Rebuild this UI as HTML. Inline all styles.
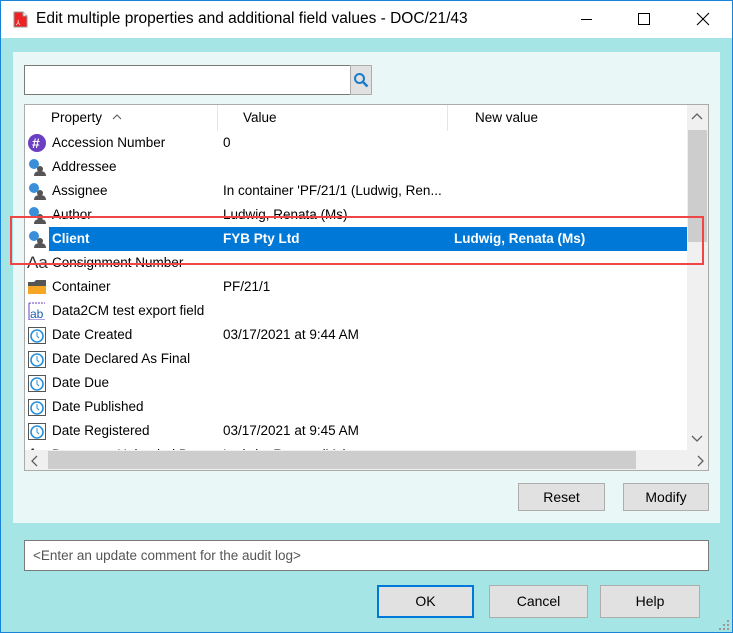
<!DOCTYPE html><html><head><style>
*{box-sizing:border-box;margin:0;padding:0}
body{width:733px;height:633px;overflow:hidden;font-family:"Liberation Sans",sans-serif;font-size:13.5px;color:#000;background:#A5E5E5;position:relative}
.a{position:absolute}
.win{left:0;top:0;width:733px;height:633px;border:1px solid #1883D7}
.title{left:1px;top:1px;width:731px;height:37px;background:#fff}
.btn{background:#E1E1E1;border:1px solid #ADADAD;text-align:center;font-size:14px}
.row{position:absolute;left:0;height:24px;line-height:24px;width:100%}
.ic{position:absolute;left:3px;top:3px;width:18px;height:18px}
.p{position:absolute;left:27px}
.v{position:absolute;left:198px}
</style></head><body>
<div class="a win"></div>
<div class="a title">
 <svg class="a" style="left:11px;top:10px" width="16" height="17"><path d="M2 1h9l4 4v11H2z" fill="#E22" stroke="#999"/><path d="M11 1v4h4" fill="#fff" stroke="#999"/><text x="4" y="14" font-size="7" fill="#fff">⅄</text></svg>
 <div class="a" style="left:35px;top:9px;font-size:15.5px">Edit multiple properties and additional field values - DOC/21/43</div>
 <div class="a" style="left:580px;top:18px;width:11px;height:1px;background:#000"></div>
 <div class="a" style="left:637px;top:12px;width:12px;height:12px;border:1px solid #000"></div>
 <svg class="a" style="left:695px;top:11px" width="14" height="14"><path d="M1 1L13 13M13 1L1 13" stroke="#000" stroke-width="1.1"/></svg>
</div>
<div class="a" style="left:13px;top:52px;width:707px;height:471px;background:#EAF7F7"></div>
<div class="a" style="left:24px;top:65px;width:327px;height:30px;background:#fff;border:1px solid #7A7A7A"></div>
<div class="a" style="left:350px;top:65px;width:22px;height:30px;background:#E1E1E1;border:1px solid #ADADAD"></div>
<svg class="a" style="left:352px;top:71px" width="18" height="18"><circle cx="7.5" cy="7.5" r="4.5" fill="none" stroke="#1A7CC8" stroke-width="2"/><path d="M11 11l4.5 4.5" stroke="#1A7CC8" stroke-width="2.5"/></svg>
<div class="a" style="left:24px;top:104px;width:685px;height:367px;background:#fff;border:1px solid #ABABAB;overflow:hidden">
 <div class="a" style="left:0;top:0;width:662px;height:26px;line-height:25px">
  <span class="a" style="left:26px">Property</span>
  <svg class="a" style="left:87px;top:9px" width="10" height="6"><path d="M1 5l4-4 4 4" fill="none" stroke="#555"/></svg>
  <div class="a" style="left:192px;top:0;width:1px;height:26px;background:#E5E5E5"></div>
  <span class="a" style="left:218px">Value</span>
  <div class="a" style="left:422px;top:0;width:1px;height:26px;background:#E5E5E5"></div>
  <span class="a" style="left:450px">New value</span>
 </div>
 <div class="a" style="left:0;top:26px;width:662px;height:320px;">
  <div class="row" style="top:0"><svg class="ic"><circle cx="9" cy="9" r="9" fill="#6A3FC1"/><text x="4" y="14" fill="#fff" font-size="14" font-weight="bold">#</text></svg><span class="p">Accession Number</span><span class="v">0</span></div>
  <div class="row" style="top:24px"><svg class="ic"><circle cx="6" cy="6" r="5" fill="#3A8FD8"/><circle cx="12" cy="11" r="3" fill="#555"/><path d="M6 18q0-5 6-5t6 5z" fill="#555"/></svg><span class="p">Addressee</span></div>
  <div class="row" style="top:48px"><svg class="ic"><circle cx="6" cy="6" r="5" fill="#3A8FD8"/><circle cx="12" cy="11" r="3" fill="#555"/><path d="M6 18q0-5 6-5t6 5z" fill="#555"/></svg><span class="p">Assignee</span><span class="v">In container 'PF/21/1 (Ludwig, Ren...</span></div>
  <div class="row" style="top:72px"><svg class="ic"><circle cx="6" cy="6" r="5" fill="#3A8FD8"/><circle cx="12" cy="11" r="3" fill="#555"/><path d="M6 18q0-5 6-5t6 5z" fill="#555"/></svg><span class="p">Author</span><span class="v">Ludwig, Renata (Ms)</span></div>
  <div class="row" style="top:96px"><div class="a" style="left:24px;top:0;width:639px;height:24px;background:#0078D7"></div><svg class="ic"><circle cx="6" cy="6" r="5" fill="#3A8FD8"/><circle cx="12" cy="11" r="3" fill="#555"/><path d="M6 18q0-5 6-5t6 5z" fill="#555"/></svg><span class="p" style="color:#fff;font-weight:bold">Client</span><span class="v" style="color:#fff;font-weight:bold">FYB Pty Ltd</span><span class="a" style="left:429px;color:#fff;font-weight:bold">Ludwig, Renata (Ms)</span></div>
  <div class="row" style="top:120px"><span class="a" style="left:2px;font-size:17px;color:#333">Aa</span><span class="p">Consignment Number</span></div>
  <div class="row" style="top:144px"><svg class="ic"><path d="M0 4h6l2-2h10v14H0z" fill="#555"/><path d="M0 8h18v8H0z" fill="#F6A623"/></svg><span class="p">Container</span><span class="v">PF/21/1</span></div>
  <div class="row" style="top:168px"><svg class="ic"><path d="M1 1h16" stroke="#6A3FC1" stroke-dasharray="2 1"/><path d="M1 1v17h16" fill="none" stroke="#6A3FC1"/><text x="2" y="16" font-size="12" fill="#1A5FB4">ab</text></svg><span class="p">Data2CM test export field</span></div>
  <div class="row" style="top:192px"><svg class="ic"><rect x="0.5" y="1.5" width="17" height="16" fill="none" stroke="#555"/><circle cx="9" cy="10" r="6" fill="#fff" stroke="#2A8FD8" stroke-width="1.6"/><path d="M9 6v4l2 2" stroke="#2A8FD8" fill="none"/></svg><span class="p">Date Created</span><span class="v">03/17/2021 at 9:44 AM</span></div>
  <div class="row" style="top:216px"><svg class="ic"><rect x="0.5" y="1.5" width="17" height="16" fill="none" stroke="#555"/><circle cx="9" cy="10" r="6" fill="#fff" stroke="#2A8FD8" stroke-width="1.6"/><path d="M9 6v4l2 2" stroke="#2A8FD8" fill="none"/></svg><span class="p">Date Declared As Final</span></div>
  <div class="row" style="top:240px"><svg class="ic"><rect x="0.5" y="1.5" width="17" height="16" fill="none" stroke="#555"/><circle cx="9" cy="10" r="6" fill="#fff" stroke="#2A8FD8" stroke-width="1.6"/><path d="M9 6v4l2 2" stroke="#2A8FD8" fill="none"/></svg><span class="p">Date Due</span></div>
  <div class="row" style="top:264px"><svg class="ic"><rect x="0.5" y="1.5" width="17" height="16" fill="none" stroke="#555"/><circle cx="9" cy="10" r="6" fill="#fff" stroke="#2A8FD8" stroke-width="1.6"/><path d="M9 6v4l2 2" stroke="#2A8FD8" fill="none"/></svg><span class="p">Date Published</span></div>
  <div class="row" style="top:288px"><svg class="ic"><rect x="0.5" y="1.5" width="17" height="16" fill="none" stroke="#555"/><circle cx="9" cy="10" r="6" fill="#fff" stroke="#2A8FD8" stroke-width="1.6"/><path d="M9 6v4l2 2" stroke="#2A8FD8" fill="none"/></svg><span class="p">Date Registered</span><span class="v">03/17/2021 at 9:45 AM</span></div>
  <div class="row" style="top:312px"><span class="a" style="left:2px;font-size:17px;color:#333">Aa</span><span class="p">Document Uploaded By</span><span class="v">Ludwig, Renata (Ms)</span></div>
 </div>
 <div class="a" style="left:662px;top:0;width:21px;height:345px;background:#F0F0F0"></div>
 <div class="a" style="left:663px;top:25px;width:19px;height:112px;background:#CDCDCD"></div>
 <svg class="a" style="left:666px;top:8px" width="12" height="8"><path d="M1 6l5-5 5 5" fill="none" stroke="#606060" stroke-width="1.3"/></svg>
 <svg class="a" style="left:666px;top:330px" width="12" height="8"><path d="M1 1l5 5 5-5" fill="none" stroke="#606060" stroke-width="1.3"/></svg>
 <div class="a" style="left:0;top:345px;width:683px;height:20px;background:#F0F0F0"></div>
 <div class="a" style="left:23px;top:346px;width:588px;height:18px;background:#CDCDCD"></div>
 <svg class="a" style="left:6px;top:350px" width="8" height="12"><path d="M6 1L1 6l5 5" fill="none" stroke="#606060" stroke-width="1.3"/></svg>
 <svg class="a" style="left:672px;top:350px" width="8" height="12"><path d="M1 1l5 5-5 5" fill="none" stroke="#606060" stroke-width="1.3"/></svg>
</div>
<div class="a" style="left:10px;top:216px;width:694px;height:49px;border:2px solid #F04545"></div>
<div class="a btn" style="left:518px;top:483px;width:87px;height:28px;line-height:26px">Reset</div>
<div class="a btn" style="left:623px;top:483px;width:86px;height:28px;line-height:26px">Modify</div>
<div class="a" style="left:24px;top:540px;width:685px;height:31px;background:#fff;border:1px solid #7A7A7A;line-height:29px;padding-left:8px;color:#555">&lt;Enter an update comment for the audit log&gt;</div>
<div class="a btn" style="left:377px;top:585px;width:97px;height:33px;line-height:29px;border:2px solid #0078D7">OK</div>
<div class="a btn" style="left:489px;top:585px;width:99px;height:33px;line-height:31px">Cancel</div>
<div class="a btn" style="left:600px;top:585px;width:100px;height:33px;line-height:31px">Help</div>
<svg class="a" style="left:719px;top:620px" width="12" height="12"><g fill="#999"><rect x="8" y="0" width="2" height="2"/><rect x="4" y="4" width="2" height="2"/><rect x="8" y="4" width="2" height="2"/><rect x="0" y="8" width="2" height="2"/><rect x="4" y="8" width="2" height="2"/><rect x="8" y="8" width="2" height="2"/></g></svg>
</body></html>
